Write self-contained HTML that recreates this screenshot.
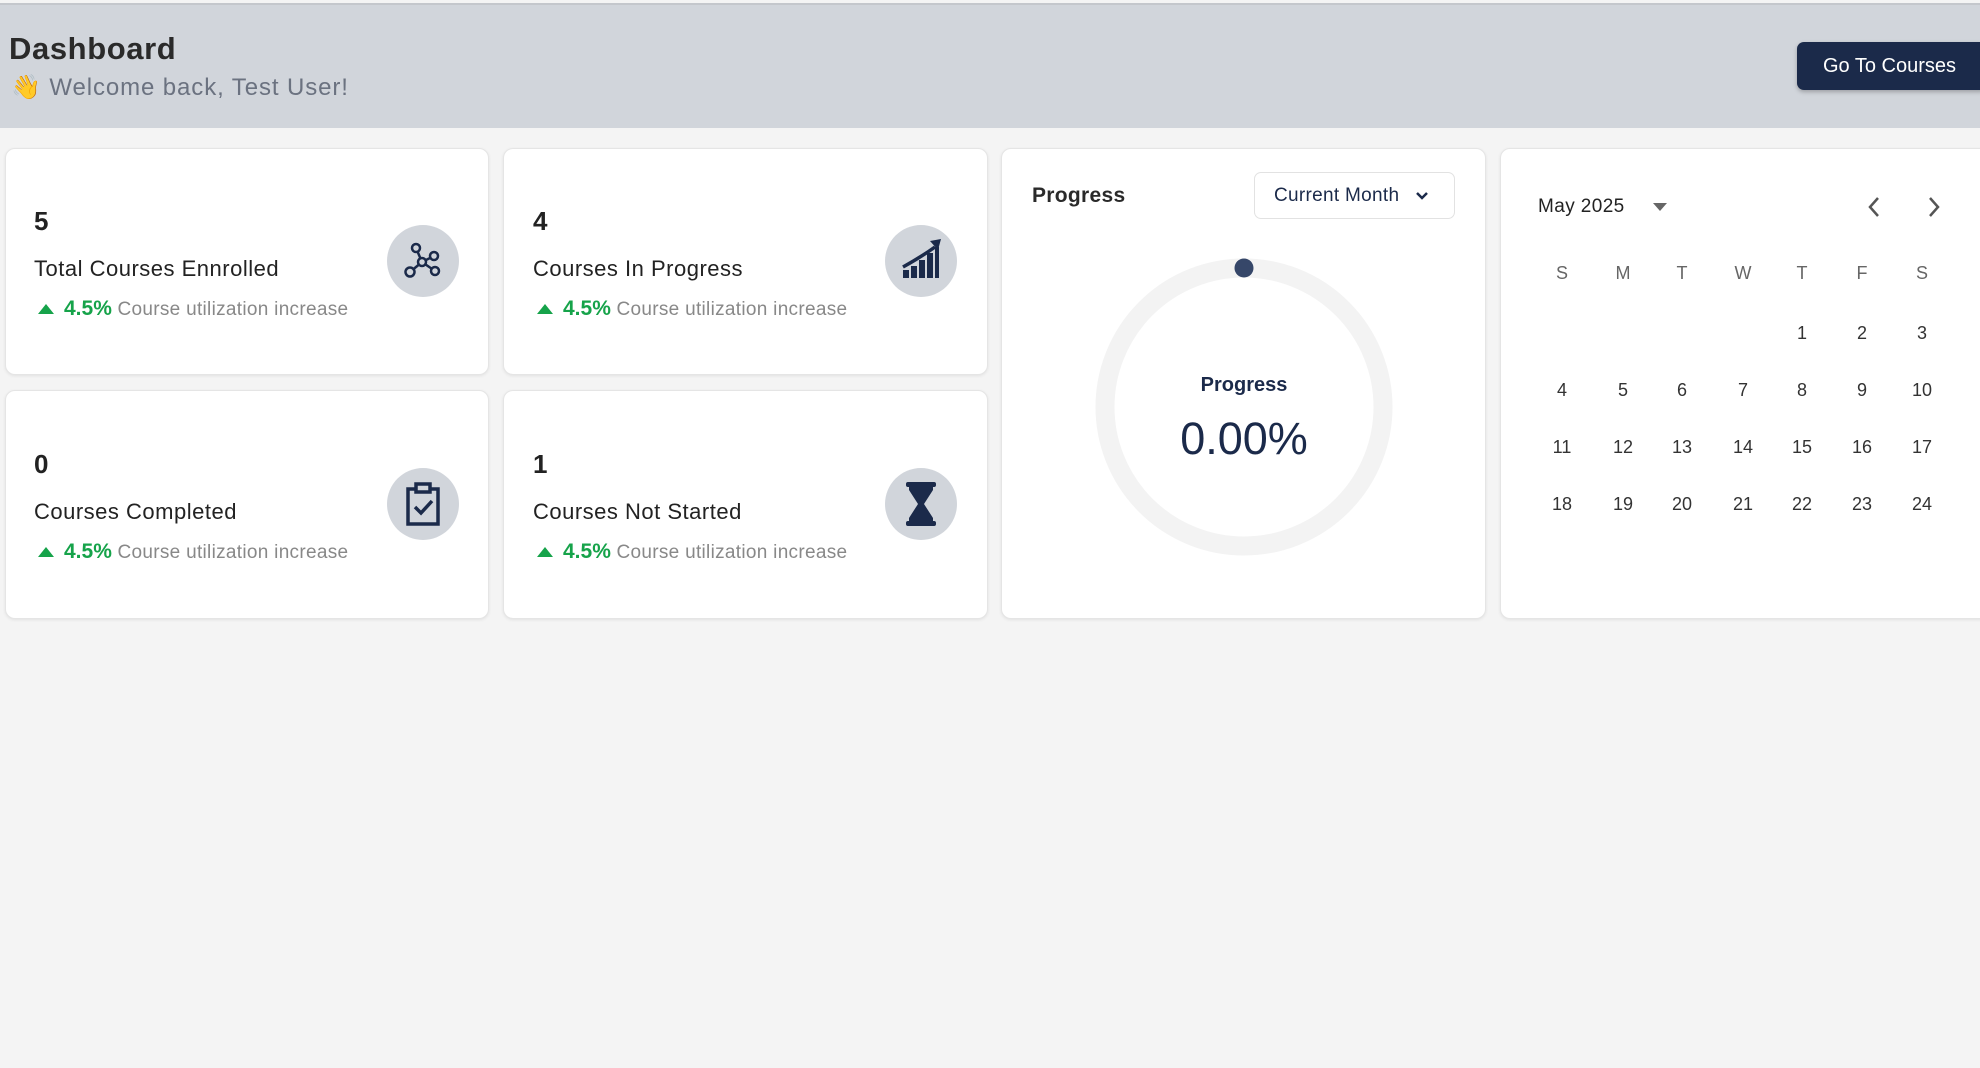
<!DOCTYPE html>
<html><head><meta charset="utf-8"><style>
*{margin:0;padding:0;box-sizing:border-box}
body{width:1980px;height:1068px;background:#f4f4f4;font-family:"Liberation Sans",sans-serif;position:relative;overflow:hidden;color:#222}
.a{position:absolute;white-space:nowrap}
.hdr{position:absolute;left:0;top:3px;width:1980px;height:125px;background:#d1d5db;border-top:2px solid #c4c7cc}
.card{position:absolute;background:#fff;border:1px solid #e5e5e5;border-radius:10px;box-shadow:0 1px 3px rgba(0,0,0,.08)}
.num{font-size:26px;font-weight:bold;color:#222}
.lbl{font-size:22px;color:#222;letter-spacing:0.5px}
.st{font-size:19px;color:#888;letter-spacing:0.3px}
.st b{color:#16a34a;font-size:21px;letter-spacing:0}
.tri{display:inline-block;width:0;height:0;border-left:8px solid transparent;border-right:8px solid transparent;border-bottom:10px solid #16a34a;margin-right:10px;vertical-align:1px}
.ic{position:absolute;width:72px;height:72px;border-radius:50%;background:#d1d5db}
.cal{font-size:18px;color:#333;width:40px;text-align:center}
.dh{color:#666}
</style></head><body>
<div class="hdr"></div>
<div class="a" style="left:9px;top:31px;font-size:31px;font-weight:bold;color:#2a2a2a;letter-spacing:0.6px">Dashboard</div>
<div class="a" style="left:11px;top:73px;font-size:24px;color:#6b7280;letter-spacing:0.9px">👋 Welcome back, Test User!</div>
<div class="a" style="left:1797px;top:42px;width:190px;height:48px;background:#1b2a4a;border-radius:7px;color:#fff;font-size:20px;line-height:48px;padding-left:26px;box-shadow:0 2px 4px rgba(0,0,0,.25)">Go To Courses</div>

<div class="card" style="left:5px;top:148px;width:484px;height:227px"></div>
<div class="card" style="left:503px;top:148px;width:485px;height:227px"></div>
<div class="card" style="left:5px;top:390px;width:484px;height:229px"></div>
<div class="card" style="left:503px;top:390px;width:485px;height:229px"></div>
<div class="card" style="left:1001px;top:148px;width:485px;height:471px"></div>
<div class="card" style="left:1500px;top:148px;width:500px;height:471px"></div>

<div class="a num" style="left:34px;top:206px">5</div>
<div class="a lbl" style="left:34px;top:256px">Total Courses Ennrolled</div>
<div class="a st" style="left:38px;top:297px"><span class="tri"></span><b>4.5%</b> Course utilization increase</div>
<div class="a num" style="left:533px;top:206px">4</div>
<div class="a lbl" style="left:533px;top:256px">Courses In Progress</div>
<div class="a st" style="left:537px;top:297px"><span class="tri"></span><b>4.5%</b> Course utilization increase</div>
<div class="a num" style="left:34px;top:449px">0</div>
<div class="a lbl" style="left:34px;top:499px">Courses Completed</div>
<div class="a st" style="left:38px;top:540px"><span class="tri"></span><b>4.5%</b> Course utilization increase</div>
<div class="a num" style="left:533px;top:449px">1</div>
<div class="a lbl" style="left:533px;top:499px">Courses Not Started</div>
<div class="a st" style="left:537px;top:540px"><span class="tri"></span><b>4.5%</b> Course utilization increase</div>

<svg class="ic" style="left:387px;top:225px" viewBox="-36 -36 72 72" fill="none" stroke="#1b2a4a" stroke-width="2.5">
<line x1="-1" y1="1" x2="-7" y2="-13"/><line x1="-1" y1="1" x2="11" y2="-5"/><line x1="-1" y1="1" x2="12" y2="10"/><line x1="-1" y1="1" x2="-13" y2="11"/>
<circle cx="-1" cy="1" r="4" fill="#d1d5db"/><circle cx="-7" cy="-13" r="4" fill="#d1d5db"/><circle cx="11" cy="-5" r="4" fill="#d1d5db"/><circle cx="12" cy="10" r="4" fill="#d1d5db"/><circle cx="-13" cy="11" r="4.5" fill="#d1d5db"/>
</svg>
<svg class="ic" style="left:885px;top:225px" viewBox="-36 -36 72 72" fill="#1b2a4a">
<rect x="-18" y="9" width="6" height="8"/><rect x="-10" y="5" width="6" height="12"/><rect x="-2" y="-1" width="6" height="18"/><rect x="6" y="-8" width="6" height="25"/><rect x="14" y="-14" width="4" height="31"/>
<path d="M-18 6 Q0 -4 14 -14" stroke="#1b2a4a" stroke-width="3.5" fill="none"/><path d="M9 -20 L20 -22 L17 -11 Z"/>
</svg>
<svg class="ic" style="left:387px;top:468px" viewBox="-36 -36 72 72" fill="none" stroke="#1b2a4a" stroke-width="3.5">
<rect x="-15" y="-15" width="30" height="35"/><rect x="-7" y="-20" width="14" height="8" fill="#d1d5db"/><path d="M-8 3 L-2 9 L9 -3"/>
</svg>
<svg class="ic" style="left:885px;top:468px" viewBox="-36 -36 72 72" fill="#1b2a4a">
<rect x="-15" y="-22" width="30" height="5" rx="2"/><rect x="-15" y="17" width="30" height="5" rx="2"/>
<path d="M-12 -18 L12 -18 L12 -14 L3 0 L12 14 L12 18 L-12 18 L-12 14 L-3 0 L-12 -14 Z"/>
</svg>

<div class="a" style="left:1032px;top:184px;font-size:21px;font-weight:bold;color:#2a2a2a;letter-spacing:0.3px">Progress</div>
<div class="a" style="left:1254px;top:172px;width:201px;height:47px;border:1px solid #e2e2e2;border-radius:7px;font-size:19px;color:#1b2a4a;line-height:45px;padding-left:19px;letter-spacing:0.3px">Current Month <svg width="14" height="10" style="margin-left:10px" viewBox="0 0 14 10"><path d="M2 2 L7 7 L12 2" stroke="#1b2a4a" stroke-width="2.5" fill="none"/></svg></div>
<svg class="a" style="left:1084px;top:247px" width="320" height="320" viewBox="0 0 320 320">
<circle cx="160" cy="160" r="139" fill="none" stroke="#f3f3f3" stroke-width="19"/>
<circle cx="160" cy="21" r="9.5" fill="#364769"/>
</svg>
<div class="a" style="left:1144px;top:374px;width:200px;text-align:center;font-size:20px;font-weight:bold;color:#1b2a4a">Progress</div>
<div class="a" style="left:1094px;top:413px;width:300px;text-align:center;font-size:45px;color:#1b2a4a">0.00%</div>

<div class="a" style="left:1538px;top:196px;font-size:19px;color:#222;letter-spacing:0.4px">May 2025</div>
<svg class="a" style="left:1652px;top:202px" width="16" height="10"><path d="M1 1 L15 1 L8 9 Z" fill="#666"/></svg>
<svg class="a" style="left:1866px;top:196px" width="16" height="22"><path d="M12 2 L4 11 L12 20" stroke="#555" stroke-width="2.5" fill="none"/></svg>
<svg class="a" style="left:1926px;top:196px" width="16" height="22"><path d="M4 2 L12 11 L4 20" stroke="#555" stroke-width="2.5" fill="none"/></svg>

<div class="a cal dh" style="left:1542px;top:263px">S</div><div class="a cal dh" style="left:1603px;top:263px">M</div><div class="a cal dh" style="left:1662px;top:263px">T</div><div class="a cal dh" style="left:1723px;top:263px">W</div><div class="a cal dh" style="left:1782px;top:263px">T</div><div class="a cal dh" style="left:1842px;top:263px">F</div><div class="a cal dh" style="left:1902px;top:263px">S</div>

<div class="a cal" style="left:1782px;top:323px">1</div><div class="a cal" style="left:1842px;top:323px">2</div><div class="a cal" style="left:1902px;top:323px">3</div>

<div class="a cal" style="left:1542px;top:380px">4</div><div class="a cal" style="left:1603px;top:380px">5</div><div class="a cal" style="left:1662px;top:380px">6</div><div class="a cal" style="left:1723px;top:380px">7</div><div class="a cal" style="left:1782px;top:380px">8</div><div class="a cal" style="left:1842px;top:380px">9</div><div class="a cal" style="left:1902px;top:380px">10</div>

<div class="a cal" style="left:1542px;top:437px">11</div><div class="a cal" style="left:1603px;top:437px">12</div><div class="a cal" style="left:1662px;top:437px">13</div><div class="a cal" style="left:1723px;top:437px">14</div><div class="a cal" style="left:1782px;top:437px">15</div><div class="a cal" style="left:1842px;top:437px">16</div><div class="a cal" style="left:1902px;top:437px">17</div>

<div class="a cal" style="left:1542px;top:494px">18</div><div class="a cal" style="left:1603px;top:494px">19</div><div class="a cal" style="left:1662px;top:494px">20</div><div class="a cal" style="left:1723px;top:494px">21</div><div class="a cal" style="left:1782px;top:494px">22</div><div class="a cal" style="left:1842px;top:494px">23</div><div class="a cal" style="left:1902px;top:494px">24</div>
</body></html>
